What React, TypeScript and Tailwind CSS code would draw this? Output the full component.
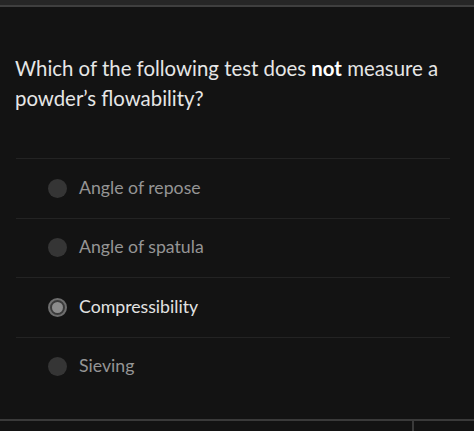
import React from "react";

const options = [
  { label: "Angle of repose", selected: false },
  { label: "Angle of spatula", selected: false },
  { label: "Compressibility", selected: true },
  { label: "Sieving", selected: false },
];

export default function App() {
  return (
    <div className="w-[474px] h-[431px] bg-[#131313] flex flex-col overflow-hidden" style={{ fontFamily: "Lato, 'Noto Sans', sans-serif" }}>
      {/* top bar */}
      <div className="h-[5px] bg-[#262626]" />
      <div className="h-[2px] bg-[#3f3f3f]" />

      <p className="pt-[46px] px-[15px] text-[20.4px] leading-[30px] text-[#e6e6e6]">
        Which of the following test does <b className="font-bold text-white">not</b> measure a powder’s flowability?
      </p>

      <div className="mt-[45px] ml-[16px] w-[434px]">
        {options.map((o) => (
          <div key={o.label} className="h-[59.5px] border-t border-[#232323] flex items-center">
            {o.selected ? (
              <span className="ml-[32px] w-[19px] h-[19px] rounded-full border-2 border-[#6e6e6e] bg-[#3a3a3a] flex items-center justify-center">
                <span className="w-[11px] h-[11px] rounded-full bg-[#8c8c8c]" />
              </span>
            ) : (
              <span className="ml-[32px] w-[19px] h-[19px] rounded-full bg-[#353535]" />
            )}
            <span className={`ml-[12px] text-[17.7px] ${o.selected ? "text-[#e2e2e2]" : "text-[#959595]"}`}>{o.label}</span>
          </div>
        ))}
      </div>

      <div className="flex-1" />
      <div className="h-[12px] border-t-2 border-[#3a3a3a] flex">
        <div className="w-[412px]" />
        <div className="w-[2px] bg-[#3a3a3a]" />
      </div>
    </div>
  );
}
